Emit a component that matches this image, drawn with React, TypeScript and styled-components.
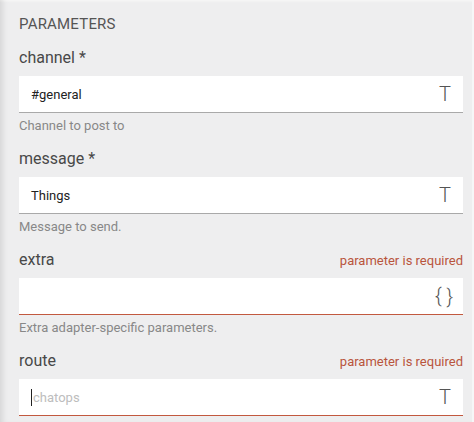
import styled, { createGlobalStyle } from "styled-components";

const Global = createGlobalStyle`
    html, body {
        margin: 0;
        padding: 0;
        background: #eeeeef;
    }
    body {
        font-family: Roboto, "Liberation Sans", sans-serif;
    }
`;

const Panel = styled.div`
    position: relative;
    width: 474px;
    height: 422px;
    box-sizing: border-box;
    padding: 14px 9px 0 19px;
    background: #eeeeef;
    box-shadow: inset 6px 0 6px -4px rgba(0, 0, 0, 0.12), inset 0 4px 3px -3px rgba(255, 255, 255, 0.8);
    border-right: 2px solid #f6f6f7;
    overflow: hidden;
`;

const Heading = styled.div`
    font-size: 15px;
    line-height: 20px;
    color: #555;
    letter-spacing: 0.2px;
    margin-bottom: 12px;
`;

const Field = styled.div`
    margin-bottom: 12px;
`;

const LabelRow = styled.div`
    display: flex;
    justify-content: space-between;
    align-items: baseline;
    height: 24px;
    margin-bottom: 6px;
`;

const Label = styled.span`
    font-size: 16px;
    line-height: 24px;
    color: #484848;
`;

const Error = styled.span`
    font-size: 13px;
    line-height: 24px;
    color: #b9553d;
`;

const InputBox = styled.div<{ $error?: boolean }>`
    display: flex;
    align-items: center;
    height: 36px;
    padding: 0 10px 0 12px;
    background: #fff;
    border-bottom: 1px solid ${(p) => (p.$error ? "#c2593f" : "#a9a9a9")};
`;

const Value = styled.span<{ $placeholder?: boolean }>`
    flex: 1;
    font-size: 13px;
    color: ${(p) => (p.$placeholder ? "#bdbdbd" : "#222")};
`;

const Caret = styled.span`
    display: inline-block;
    width: 1px;
    height: 17px;
    background: #222;
    vertical-align: -4px;
    margin-right: 1px;
`;

const TypeIcon = styled.span`
    font-size: 20px;
    font-weight: 300;
    color: #555;
    min-width: 16px;
    text-align: center;
    white-space: nowrap;
`;

const Help = styled.div`
    font-size: 13px;
    line-height: 18px;
    color: #888;
    margin-top: 4px;
`;

type Param = {
    name: string;
    required?: boolean;
    value?: string;
    placeholder?: string;
    icon: string;
    help?: string;
    error?: boolean;
    focused?: boolean;
};

const params: Param[] = [
    { name: "channel", required: true, value: "#general", icon: "T", help: "Channel to post to" },
    { name: "message", required: true, value: "Things", icon: "T", help: "Message to send." },
    { name: "extra", icon: "{ }", help: "Extra adapter-specific parameters.", error: true },
    { name: "route", placeholder: "chatops", icon: "T", error: true, focused: true },
];

function App() {
    return (
        <>
            <Global />
            <Panel>
                <Heading>PARAMETERS</Heading>
                {params.map((p) => (
                    <Field key={p.name}>
                        <LabelRow>
                            <Label>
                                {p.name}
                                {p.required ? " *" : ""}
                            </Label>
                            {p.error && <Error>parameter is required</Error>}
                        </LabelRow>
                        <InputBox $error={p.error}>
                            <Value $placeholder={!p.value}>
                                {p.focused && <Caret />}
                                {p.value || p.placeholder}
                            </Value>
                            <TypeIcon>{p.icon}</TypeIcon>
                        </InputBox>
                        {p.help && <Help>{p.help}</Help>}
                    </Field>
                ))}
            </Panel>
        </>
    );
}

export default App;
